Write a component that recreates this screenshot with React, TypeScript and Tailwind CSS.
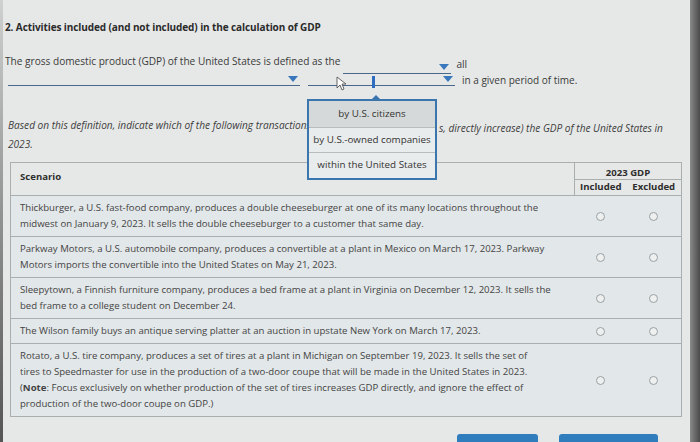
import React from "react";

const rows: { text: React.ReactNode }[] = [
  {
    text: (
      <>
        Thickburger, a U.S. fast-food company, produces a double cheeseburger at one of its many locations throughout the
        <br />
        midwest on January 9, 2023. It sells the double cheeseburger to a customer that same day.
      </>
    ),
  },
  {
    text: (
      <>
        Parkway Motors, a U.S. automobile company, produces a convertible at a plant in Mexico on March 17, 2023. Parkway
        <br />
        Motors imports the convertible into the United States on May 21, 2023.
      </>
    ),
  },
  {
    text: (
      <>
        Sleepytown, a Finnish furniture company, produces a bed frame at a plant in Virginia on December 12, 2023. It sells the
        <br />
        bed frame to a college student on December 24.
      </>
    ),
  },
  {
    text: <>The Wilson family buys an antique serving platter at an auction in upstate New York on March 17, 2023.</>,
  },
  {
    text: (
      <>
        Rotato, a U.S. tire company, produces a set of tires at a plant in Michigan on September 19, 2023. It sells the set of
        <br />
        tires to Speedmaster for use in the production of a two-door coupe that will be made in the United States in 2023.
        <br />
        (<span className="font-bold">Note</span>: Focus exclusively on whether production of the set of tires increases GDP directly, and ignore the effect of
        <br />
        production of the two-door coupe on GDP.)
      </>
    ),
  },
];

function Caret() {
  return (
    <svg width="10" height="6" viewBox="0 0 10 6" className="shrink-0">
      <path d="M0 0h10L5 6z" fill="#3a78bd" />
    </svg>
  );
}

function Dropdown({ width }: { width: number }) {
  return (
    <div className="flex items-center justify-end border-b border-[#49688c] pb-[3px] pr-[2px]" style={{ width }}>
      <Caret />
    </div>
  );
}

function Radio() {
  return <span className="mx-auto block h-[9px] w-[9px] rounded-full border border-[#9aa1a3] bg-[#eef0f0]" />;
}

export default function App() {
  return (
    <div className="flex h-[442px] w-[700px] overflow-hidden bg-[#e6e8e7] font-['Open_Sans',sans-serif] text-[#333]">
      <div className="w-[3px] bg-gradient-to-b from-[#cfd1d0] to-[#555]" />
      <div className="relative flex flex-1 flex-col pl-[2px] pt-[19px]">
        <h1 className="text-[10px] font-bold leading-[16px] tracking-[-0.1px] text-[#2b2b2b]">
          2. Activities included (and not included) in the calculation of GDP
        </h1>

        <div className="mt-[19px] flex items-end text-[10.1px] leading-[14px] text-[#3a3a3a]">
          <span>The gross domestic product (GDP) of the United States is defined as the</span>
          <div className="ml-[3px] mb-[-6px]">
            <Dropdown width={108} />
          </div>
          <span className="ml-[5px] mb-[-3px]">all</span>
        </div>

        <div className="mt-[5px] flex items-end text-[10px] leading-[14px] text-[#3a3a3a]">
          <div className="ml-[3px]">
            <Dropdown width={292} />
          </div>
          <div className="ml-[8px]">
            <Dropdown width={147} />
          </div>
          <span className="ml-[7px] mb-[-1px]">in a given period of time.</span>
        </div>

        <div className="mt-[31px] text-[10.1px] italic leading-[16px] text-[#3d3d3d]">
          <div className="flex whitespace-nowrap">
            <span className="ml-[3px] w-[302px]">Based on this definition, indicate which of the following transactions</span>
            <span className="ml-[129px] mt-[3px]">s, directly increase) the GDP of the United States in</span>
          </div>
          <div className="ml-[3px]">2023.</div>
        </div>

        <div className="mt-[10px] mr-[8px] ml-[5px]">
          <table className="w-[672px] border-collapse border border-[#a9aeae] text-[9.6px] leading-[16px] text-[#444]">
            <thead>
              <tr className="border-b border-[#a9aeae]">
                <th className="pb-[10px] pl-[9px] text-left align-bottom font-bold text-[#2e2e2e]" rowSpan={2}>
                  Scenario
                </th>
                <th
                  colSpan={2}
                  className="border-x border-t border-[#a9aeae] pt-[3px] text-center font-bold leading-[13px] text-[#2e2e2e]"
                >
                  2023 GDP
                </th>
              </tr>
              <tr className="border-b border-[#a9aeae]">
                <th className="w-[52px] border-l border-t border-[#a9aeae] pb-[1px] text-center font-bold leading-[14px] text-[#2e2e2e]">
                  Included
                </th>
                <th className="w-[55px] border-t border-r border-[#a9aeae] pb-[1px] text-center font-bold leading-[14px] text-[#2e2e2e]">
                  Excluded
                </th>
              </tr>
            </thead>
            <tbody>
              {rows.map((r, i) => (
                <tr key={i} className="border-b border-[#a9aeae] bg-[#e2e7e9]">
                  <td className="px-[9px] py-[4px]">{r.text}</td>
                  <td className="align-middle">
                    <Radio />
                  </td>
                  <td className="align-middle">
                    <Radio />
                  </td>
                </tr>
              ))}
            </tbody>
          </table>
        </div>

        <div className="mt-auto flex justify-end gap-[21px] pr-[32px]">
          <div className="h-[8px] w-[81px] rounded-t-[3px] bg-[#2f7dbd]" />
          <div className="h-[8px] w-[99px] rounded-t-[3px] bg-[#2f7dbd]" />
        </div>

        {/* blue text caret and mouse cursor */}
        <div className="absolute left-[369px] top-[76px] h-[12px] w-[3px] bg-[#2d6cc0]" />
        <svg className="absolute left-[333px] top-[76px]" width="10" height="15" viewBox="0 0 10 15">
          <path d="M1 1v11l3-3 2 5 2-1-2-5h4z" fill="#fff" stroke="#555" strokeWidth="0.9" />
        </svg>

        {/* open dropdown menu */}
        <div className="absolute left-[304px] top-[99px] w-[130px] border-2 border-[#3a75ad] bg-[#e9ecec] text-center text-[9.8px] text-[#333]">
          <svg className="absolute -top-[6px] left-[62px]" width="10" height="5" viewBox="0 0 10 5">
            <path d="M0 5L5 0l5 5z" fill="#3a75ad" />
          </svg>
          <div className="flex h-[26px] items-center justify-center bg-[#d6d9d9]">by U.S. citizens</div>
          <div className="flex h-[25px] items-center justify-center border-t border-[#b9bcbc]">by U.S.-owned companies</div>
          <div className="flex h-[26px] items-center justify-center border-t border-[#b9bcbc]">within the United States</div>
        </div>
      </div>
      <div className="w-[10px] bg-gradient-to-r from-[#8a8a8a] to-[#4a4a4a]" />
    </div>
  );
}
